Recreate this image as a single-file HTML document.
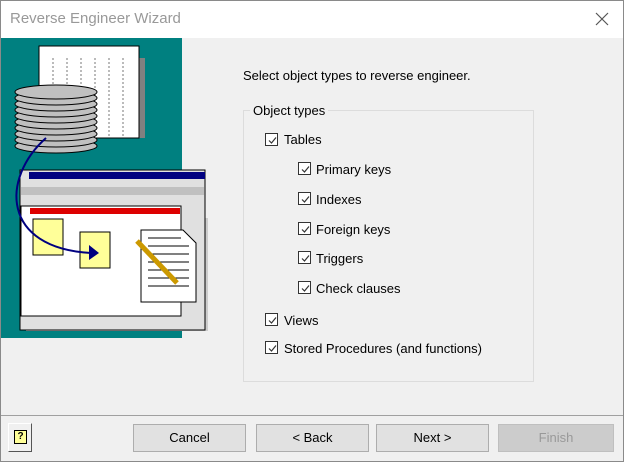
<!DOCTYPE html><html><head><style>
*{margin:0;padding:0;box-sizing:border-box}
body{width:624px;height:462px;background:#f0f0f0;font-family:"Liberation Sans",sans-serif;font-size:13px;color:#000;position:relative;overflow:hidden}
.frame{position:absolute;left:0;top:0;width:624px;height:462px;border:1px solid #8a8a8a;pointer-events:none}
.t{position:absolute;white-space:nowrap}
.cb{position:absolute;width:13px;height:13px;border:1px solid #333;background:#fff}
.cb svg{position:absolute;left:1px;top:1px}
.btn{position:absolute;top:424px;height:28px;background:#e1e1e1;border:1px solid #adadad;text-align:center;line-height:26px}
</style></head><body>
<div style="position:absolute;left:1px;top:1px;width:622px;height:37px;background:#fff"></div>
<div class="t" style="left:10px;top:10px;font-size:15px;color:#999">Reverse Engineer Wizard</div>
<svg class="t" style="left:595px;top:12px" width="14" height="14"><path d="M1 1L13 13M13 1L1 13" stroke="#555" stroke-width="1.2"/></svg>
<svg class="t" style="left:1px;top:38px" width="210" height="301">
<rect x="0" y="0" width="181" height="300" fill="#008080"/>
<rect x="120" y="20" width="24" height="80" fill="#808080"/>
<rect x="38" y="8" width="100" height="92" fill="#fff" stroke="#000"/>
<g stroke="#bbb" stroke-width="2">
<line x1="52" y1="20" x2="52" y2="98" stroke-dasharray="2 2"/><line x1="66" y1="20" x2="66" y2="98" stroke-dasharray="2 2"/><line x1="80" y1="20" x2="80" y2="98" stroke-dasharray="2 2"/><line x1="94" y1="20" x2="94" y2="98" stroke-dasharray="2 2"/><line x1="108" y1="20" x2="108" y2="98" stroke-dasharray="2 2"/><line x1="122" y1="20" x2="122" y2="98" stroke-dasharray="2 2"/></g>
<g fill="#c0c0c0" stroke="#000">
<ellipse cx="55" cy="108" rx="41" ry="7"/><ellipse cx="55" cy="102" rx="41" ry="7"/><ellipse cx="55" cy="96" rx="41" ry="7"/><ellipse cx="55" cy="90" rx="41" ry="7"/><ellipse cx="55" cy="84" rx="41" ry="7"/><ellipse cx="55" cy="78" rx="41" ry="7"/><ellipse cx="55" cy="72" rx="41" ry="7"/><ellipse cx="55" cy="66" rx="41" ry="7"/><ellipse cx="55" cy="60" rx="41" ry="7"/><ellipse cx="55" cy="54" rx="41" ry="7"/></g>
<rect x="25" y="180" width="182" height="113" fill="#ccc"/>
<rect x="19" y="132" width="185" height="160" fill="#e0e0e0" stroke="#000"/>
<rect x="28" y="134" width="176" height="7" fill="#000080"/>
<rect x="20" y="149" width="183" height="8" fill="#c0c0c0"/>
<rect x="20" y="168" width="160" height="110" fill="#fff" stroke="#000"/>
<rect x="29" y="170" width="150" height="6" fill="#dd0000"/>
<rect x="32" y="181" width="30" height="36" fill="#ffff99" stroke="#000"/>
<rect x="79" y="194" width="30" height="36" fill="#ffff99" stroke="#000"/>
<path d="M140 192H182L195 205V264H140Z" fill="#fff" stroke="#000"/>
<g stroke="#000"><line x1="147" y1="200" x2="180" y2="200"/><line x1="147" y1="208" x2="188" y2="208"/><line x1="147" y1="216" x2="188" y2="216"/><line x1="147" y1="224" x2="188" y2="224"/><line x1="147" y1="232" x2="188" y2="232"/><line x1="147" y1="240" x2="188" y2="240"/><line x1="147" y1="248" x2="188" y2="248"/></g>
<path d="M136 203L176 245" stroke="#cc9900" stroke-width="5"/>
<path d="M45 100C0 140 0 210 90 215" fill="none" stroke="#000080" stroke-width="2"/>
<path d="M88 207L98 215L88 222Z" fill="#000080"/>
</svg>
<div class="t" style="left:243px;top:68px">Select object types to reverse engineer.</div>
<div style="position:absolute;left:243px;top:110px;width:291px;height:272px;border:1px solid #dcdcdc"></div>
<div class="t" style="left:250px;top:103px;background:#f0f0f0;padding:0 3px">Object types</div>
<div class="cb" style="left:265px;top:133px"><svg width="11" height="11"><path d="M2 5.5L4.5 8L9 2.5" fill="none" stroke="#333" stroke-width="1.2"/></svg></div><div class="t" style="left:284px;top:132px">Tables</div>
<div class="cb" style="left:298px;top:162px"><svg width="11" height="11"><path d="M2 5.5L4.5 8L9 2.5" fill="none" stroke="#333" stroke-width="1.2"/></svg></div><div class="t" style="left:316px;top:162px">Primary keys</div>
<div class="cb" style="left:298px;top:192px"><svg width="11" height="11"><path d="M2 5.5L4.5 8L9 2.5" fill="none" stroke="#333" stroke-width="1.2"/></svg></div><div class="t" style="left:316px;top:192px">Indexes</div>
<div class="cb" style="left:298px;top:222px"><svg width="11" height="11"><path d="M2 5.5L4.5 8L9 2.5" fill="none" stroke="#333" stroke-width="1.2"/></svg></div><div class="t" style="left:316px;top:222px">Foreign keys</div>
<div class="cb" style="left:298px;top:251px"><svg width="11" height="11"><path d="M2 5.5L4.5 8L9 2.5" fill="none" stroke="#333" stroke-width="1.2"/></svg></div><div class="t" style="left:316px;top:251px">Triggers</div>
<div class="cb" style="left:298px;top:281px"><svg width="11" height="11"><path d="M2 5.5L4.5 8L9 2.5" fill="none" stroke="#333" stroke-width="1.2"/></svg></div><div class="t" style="left:316px;top:281px">Check clauses</div>
<div class="cb" style="left:265px;top:313px"><svg width="11" height="11"><path d="M2 5.5L4.5 8L9 2.5" fill="none" stroke="#333" stroke-width="1.2"/></svg></div><div class="t" style="left:284px;top:313px">Views</div>
<div class="cb" style="left:265px;top:341px"><svg width="11" height="11"><path d="M2 5.5L4.5 8L9 2.5" fill="none" stroke="#333" stroke-width="1.2"/></svg></div><div class="t" style="left:284px;top:341px">Stored Procedures (and functions)</div>
<div style="position:absolute;left:0;top:415px;width:624px;height:1px;background:#a0a0a0"></div>
<div style="position:absolute;left:8px;top:423px;width:24px;height:29px;background:#f0f0f0;border:1px solid;border-color:#fff #555 #555 #fff"></div>
<div class="t" style="left:14px;top:430px;width:13px;height:14px;background:#ff9;border:1px solid #000;font-size:10px;font-weight:bold;text-align:center;line-height:12px">?</div>
<div class="btn" style="left:133px;width:113px">Cancel</div>
<div class="btn" style="left:256px;width:113px">&lt; Back</div>
<div class="btn" style="left:376px;width:113px">Next &gt;</div>
<div class="btn" style="left:498px;width:116px;background:#ccc;border-color:#bfbfbf;color:#999">Finish</div>
<div class="frame"></div>
</body></html>
